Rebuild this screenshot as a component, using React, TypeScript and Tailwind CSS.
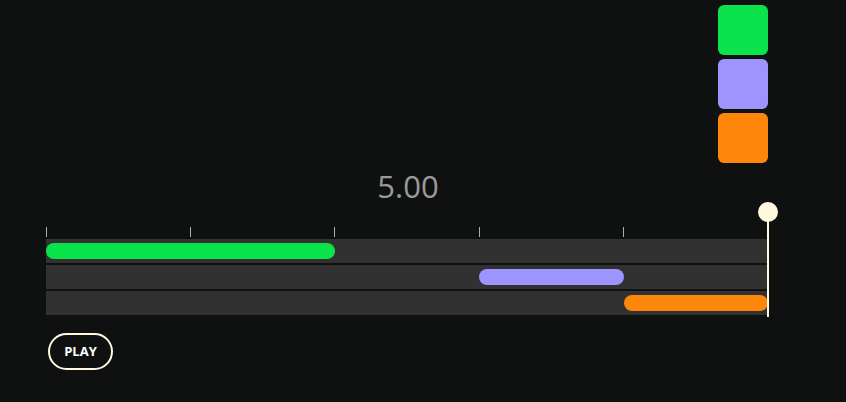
import React from 'react';

const clips = [
  { color: 'bg-[#0ae34c]', start: 0, end: 2 },
  { color: 'bg-[#9d94fd]', start: 3, end: 4 },
  { color: 'bg-[#fd860b]', start: 4, end: 5 },
];

const duration = 5;
const trackWidth = 722;

export default function App() {
  const time = 5;

  return (
    <div className="w-[846px] h-[402px] bg-[#0f1010] overflow-hidden font-['Open_Sans',sans-serif]">
      {/* swatches */}
      <div className="flex flex-col items-end gap-[4px] pt-[5px] pr-[78px]">
        {clips.map((c, i) => (
          <div key={i} className={`w-[50px] h-[50px] rounded-[6px] ${c.color}`} />
        ))}
      </div>

      <div className="pl-[46px]">
        <div className="w-[722px] mt-[3px] pl-[2px] text-center text-[31px] leading-[40px] text-[#9a9a9a]">
          {time.toFixed(2)}
        </div>

        {/* timeline */}
        <div className="relative w-[722px] mt-[21px]">
          <div className="flex justify-between h-[10px]">
            {Array.from({ length: duration + 1 }).map((_, i) => (
              <div key={i} className="w-px h-full bg-[#a9a9c4]" />
            ))}
          </div>
          <div className="flex flex-col gap-[2px] mt-[2px]">
            {clips.map((c, i) => (
              <div key={i} className="flex items-center h-[24px] bg-[#313131]">
                <div
                  className={`h-[16px] rounded-full ${c.color}`}
                  style={{
                    marginLeft: (c.start / duration) * trackWidth,
                    width: ((c.end - c.start) / duration) * trackWidth + (c.end === duration ? 1 : 0),
                  }}
                />
              </div>
            ))}
          </div>

          {/* playhead */}
          <div className="absolute left-[721px] top-[-6px] w-[2px] h-[96px] bg-[#fff8df]" />
          <div className="absolute left-[712px] top-[-25px] w-[20px] h-[20px] rounded-full bg-[#fff8df]" />
        </div>

        <button className="mt-[18px] ml-[2px] w-[65px] h-[37px] rounded-full border-2 border-[#fff8df] text-[13px] font-bold text-white">
          PLAY
        </button>
      </div>
    </div>
  );
}
